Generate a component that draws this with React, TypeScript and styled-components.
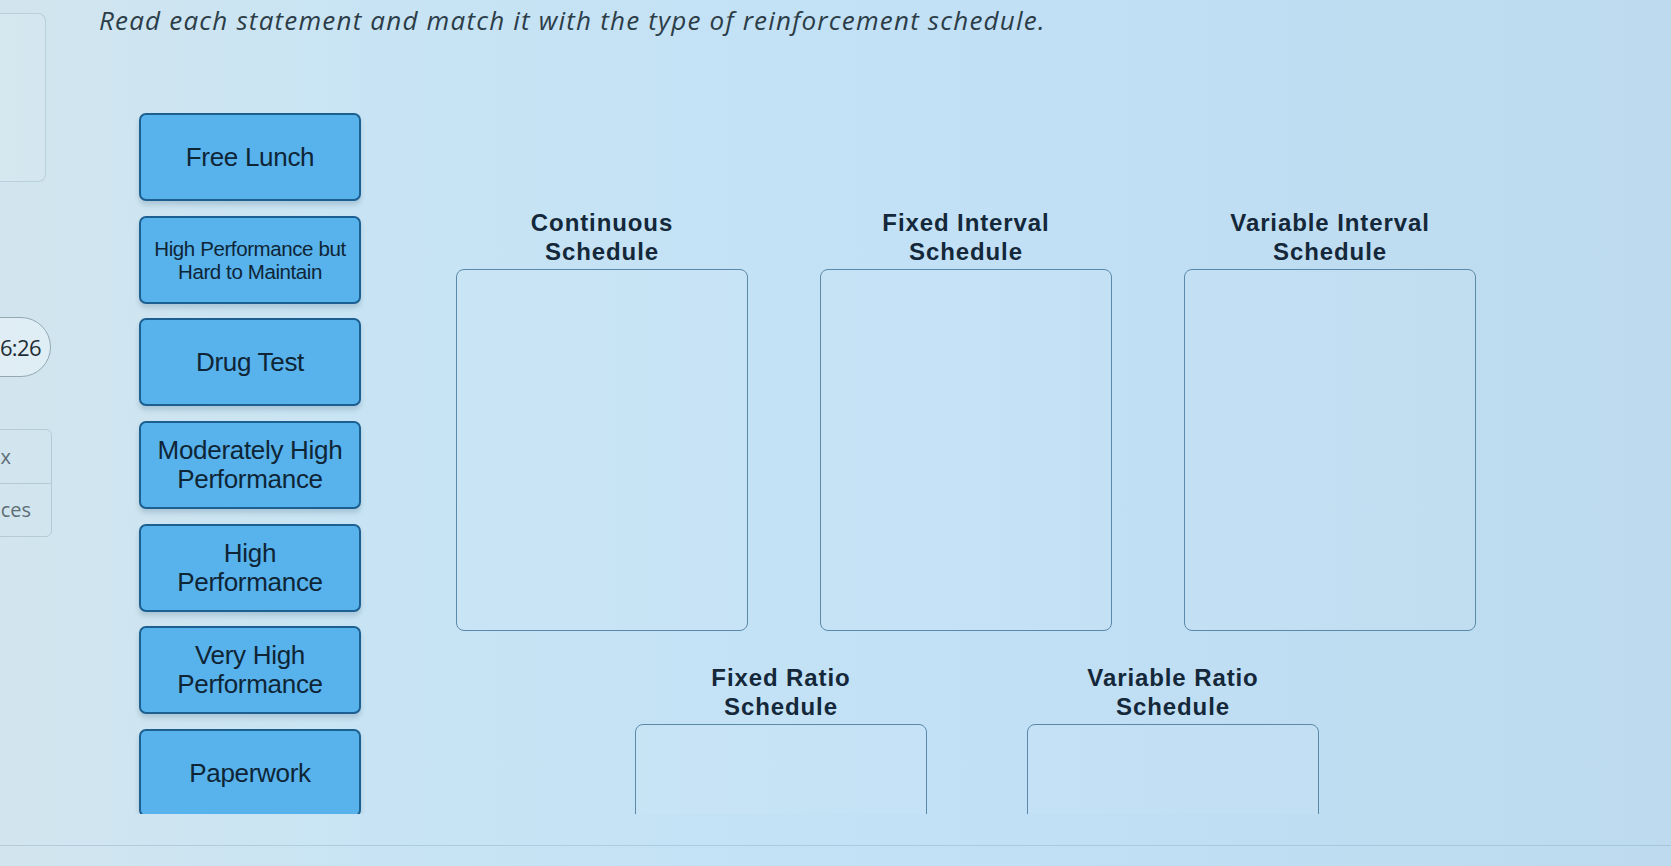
import React from 'react';
import styled, { createGlobalStyle } from 'styled-components';

const GlobalStyle = createGlobalStyle`
  html, body {
    margin: 0;
    padding: 0;
  }
  body {
    width: 1671px;
    height: 866px;
    overflow: hidden;
    background: linear-gradient(90deg, #d2e5ee 0%, #c8e4f4 22%, #c2e1f6 55%, #bddaee 100%);
    font-family: "Liberation Sans", Arial, sans-serif;
  }
`;

const Page = styled.div`
  display: flex;
  flex-direction: column;
  height: 866px;
`;

const Stage = styled.div`
  display: flex;
  height: 814px;
  overflow: hidden;
`;

const Footer = styled.div`
  flex: 1;
  padding-top: 31px;
`;

const FooterRule = styled.div`
  height: 1px;
  background: rgba(110, 145, 170, 0.28);
`;

/* sidebar, mostly cut off by the left edge of the screen */
const Sidebar = styled.aside`
  width: 52px;
  flex-shrink: 0;
  display: flex;
  flex-direction: column;
  align-items: flex-end;
`;

const SidePanel = styled.div`
  margin-top: 13px;
  width: 60px;
  height: 167px;
  margin-right: 6px;
  border: 1.5px solid rgba(150, 178, 192, 0.45);
  border-radius: 8px;
  background: rgba(255, 255, 255, 0.08);
`;

const TimerPill = styled.div`
  margin-top: 135px;
  width: 110px;
  height: 60px;
  margin-right: 1px;
  border: 1.5px solid #93a9b5;
  border-radius: 30px;
  background: rgba(235, 244, 249, 0.55);
  display: flex;
  align-items: center;
  justify-content: flex-end;
  padding-right: 9px;
  box-sizing: border-box;
  font-family: "Open Sans", sans-serif;
  font-size: 22px;
  font-weight: 500;
  color: #1f2d36;
  letter-spacing: -0.6px;
`;

const SideBox = styled.div`
  margin-top: 52px;
  width: 120px;
  height: 108px;
  border: 1.5px solid rgba(150, 178, 192, 0.5);
  border-radius: 6px;
  display: flex;
  flex-direction: column;
  box-sizing: border-box;
`;

const SideRow = styled.div<{ $pad: number; $divider?: boolean }>`
  flex: 1;
  display: flex;
  align-items: center;
  justify-content: flex-end;
  padding-right: ${(p) => p.$pad}px;
  border-top: ${(p) => (p.$divider ? '1.5px solid rgba(150, 178, 192, 0.5)' : 'none')};
  font-family: "Open Sans", sans-serif;
  font-size: 20px;
  color: #5d6d77;
`;

const Main = styled.main`
  flex: 1;
  padding-left: 47px;
  display: flex;
  flex-direction: column;
`;

const Title = styled.h1`
  margin: 4px 0 0;
  font-family: "Open Sans", sans-serif;
  font-style: italic;
  font-weight: 400;
  font-size: 26px;
  line-height: 33px;
  color: #2c3d48;
  letter-spacing: 1.2px;
  white-space: nowrap;
`;

const Workspace = styled.div`
  display: flex;
  align-items: flex-start;
`;

const CardColumn = styled.div`
  margin-left: 40px;
  padding-top: 76px;
  display: flex;
  flex-direction: column;
  gap: 14.7px;
`;

const Card = styled.div<{ $small?: boolean }>`
  width: 222px;
  height: 88px;
  box-sizing: border-box;
  background: #58b2eb;
  border: 2px solid #1c5f91;
  border-radius: 7px;
  box-shadow: 0 4px 5px rgba(40, 80, 110, 0.2);
  display: flex;
  flex-direction: column;
  align-items: center;
  justify-content: center;
  text-align: center;
  color: #0e2536;
  font-size: ${(p) => (p.$small ? '20.5px' : '26px')};
  line-height: ${(p) => (p.$small ? '23px' : '29px')};
  letter-spacing: ${(p) => (p.$small ? '-0.4px' : '-0.3px')};
  white-space: nowrap;
`;

const ZoneArea = styled.div`
  margin-left: 95px;
  padding-top: 172px;
  display: flex;
  flex-direction: column;
  gap: 33px;
`;

const ZoneRow = styled.div<{ $offset: number; $gap: number }>`
  display: flex;
  padding-left: ${(p) => p.$offset}px;
  gap: ${(p) => p.$gap}px;
`;

const Zone = styled.div`
  width: 292px;
  display: flex;
  flex-direction: column;
  align-items: center;
`;

const ZoneLabel = styled.div`
  font-weight: 700;
  font-size: 24px;
  line-height: 28.5px;
  letter-spacing: 0.9px;
  color: #14283a;
  text-align: center;
`;

const DropBox = styled.div<{ $height: number }>`
  margin-top: 3px;
  width: 100%;
  height: ${(p) => p.$height}px;
  box-sizing: border-box;
  border: 1.5px solid #5a8aab;
  border-radius: 8px;
  background: rgba(255, 255, 255, 0.05);
`;

const statements: { lines: string[]; small?: boolean }[] = [
  { lines: ['Free Lunch'] },
  { lines: ['High Performance but', 'Hard to Maintain'], small: true },
  { lines: ['Drug Test'] },
  { lines: ['Moderately High', 'Performance'] },
  { lines: ['High', 'Performance'] },
  { lines: ['Very High', 'Performance'] },
  { lines: ['Paperwork'] },
];

const topZones = [
  ['Continuous', 'Schedule'],
  ['Fixed Interval', 'Schedule'],
  ['Variable Interval', 'Schedule'],
];

const bottomZones = [
  ['Fixed Ratio', 'Schedule'],
  ['Variable Ratio', 'Schedule'],
];

const ScheduleZone = ({ label, height }: { label: string[]; height: number }) => (
  <Zone>
    <ZoneLabel>
      {label.map((l) => (
        <div key={l}>{l}</div>
      ))}
    </ZoneLabel>
    <DropBox $height={height} />
  </Zone>
);

export default function App() {
  return (
    <>
      <GlobalStyle />
      <Page>
        <Stage>
          <Sidebar>
            <SidePanel />
            <TimerPill>6:26</TimerPill>
            <SideBox>
              <SideRow $pad={40}>x</SideRow>
              <SideRow $pad={20} $divider>
                ces
              </SideRow>
            </SideBox>
          </Sidebar>

          <Main>
            <Title>Read each statement and match it with the type of reinforcement schedule.</Title>
            <Workspace>
              <CardColumn>
                {statements.map((s) => (
                  <Card key={s.lines.join(' ')} $small={s.small}>
                    {s.lines.map((l) => (
                      <span key={l}>{l}</span>
                    ))}
                  </Card>
                ))}
              </CardColumn>

              <ZoneArea>
                <ZoneRow $offset={0} $gap={72}>
                  {topZones.map((z) => (
                    <ScheduleZone key={z[0]} label={z} height={362} />
                  ))}
                </ZoneRow>
                <ZoneRow $offset={179} $gap={100}>
                  {bottomZones.map((z) => (
                    <ScheduleZone key={z[0]} label={z} height={200} />
                  ))}
                </ZoneRow>
              </ZoneArea>
            </Workspace>
          </Main>
        </Stage>
        <Footer>
          <FooterRule />
        </Footer>
      </Page>
    </>
  );
}
